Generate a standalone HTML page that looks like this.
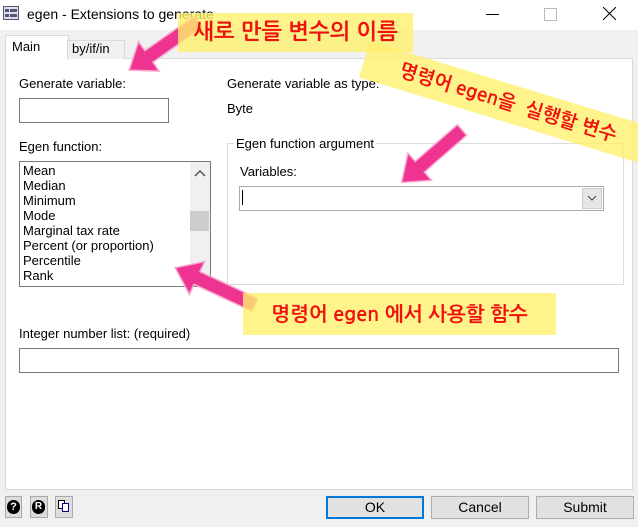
<!DOCTYPE html>
<html><head><meta charset="utf-8"><style>
body{margin:0;width:638px;height:527px;background:#f0f0f0;position:relative;overflow:hidden;font-family:"Liberation Sans","Noto Sans CJK KR",sans-serif;font-size:13px;color:#000}
.a{position:absolute}
.lbl{position:absolute;font-size:13px;white-space:nowrap}
.inp{position:absolute;background:#fff;border:1px solid #7a7a7a;box-sizing:border-box}
.btn{position:absolute;background:#e1e1e1;border:1px solid #adadad;box-sizing:border-box;text-align:center;line-height:21px;font-size:14px}
.y{position:absolute;background:rgba(255,240,110,.8);color:#f01010;font-weight:bold;font-family:"NanumGothic","Noto Sans CJK KR",sans-serif;white-space:nowrap;text-align:center}
</style></head><body>
<div class="a" style="left:0;top:0;width:638px;height:30px;background:#fff"></div>
<svg class="a" style="left:3px;top:6px" width="16" height="14"><rect x="0.5" y="0.5" width="15" height="13" fill="#dde" stroke="#557"/><rect x="2" y="3" width="4" height="3" fill="#557"/><rect x="7" y="3" width="7" height="3" fill="#557"/><rect x="2" y="8" width="4" height="3" fill="#557"/><rect x="7" y="8" width="7" height="3" fill="#557"/></svg>
<div class="lbl" style="left:27px;top:6px;font-size:14px">egen - Extensions to generate</div>
<div class="a" style="left:486px;top:14px;width:13px;height:1px;background:#000"></div>
<div class="a" style="left:544px;top:8px;width:11px;height:11px;border:1px solid #bbb"></div>
<svg class="a" style="left:603px;top:7px" width="13" height="13"><path d="M0 0L13 13M13 0L0 13" stroke="#000"/></svg>
<div class="a" style="left:5px;top:58px;width:626px;height:430px;background:#fff;border:1px solid #d9d9d9"></div>
<div class="a" style="left:5px;top:35px;width:62px;height:24px;background:#fff;border:1px solid #d9d9d9;border-bottom:none"></div>
<div class="lbl" style="left:12px;top:39px">Main</div>
<div class="a" style="left:67px;top:40px;width:56px;height:18px;background:#f0f0f0;border:1px solid #d9d9d9;border-bottom:none"></div>
<div class="lbl" style="left:72px;top:41px">by/if/in</div>
<div class="lbl" style="left:19px;top:76px">Generate variable:</div>
<div class="inp" style="left:19px;top:98px;width:150px;height:25px"></div>
<div class="lbl" style="left:227px;top:76px">Generate variable as type:</div>
<div class="lbl" style="left:227px;top:101px">Byte</div>
<div class="lbl" style="left:19px;top:139px">Egen function:</div>
<div class="inp" style="left:19px;top:161px;width:192px;height:126px"></div>
<div class="a" style="left:190px;top:162px;width:20px;height:124px;background:#f0f0f0"></div>
<div class="a" style="left:190px;top:211px;width:19px;height:20px;background:#cdcdcd"></div>
<svg class="a" style="left:194px;top:170px" width="12" height="8"><path d="M1 6L6 1L11 6" stroke="#555" stroke-width="1.5" fill="none"/></svg>
<div class="a" style="left:23px;top:163px;line-height:15px;font-size:13px">Mean<br>Median<br>Minimum<br>Mode<br>Marginal tax rate<br>Percent (or proportion)<br>Percentile<br>Rank</div>
<div class="a" style="left:227px;top:143px;width:395px;height:140px;border:1px solid #dcdcdc"></div>
<div class="lbl" style="left:234px;top:136px;background:#fff;padding:0 2px">Egen function argument</div>
<div class="lbl" style="left:240px;top:164px">Variables:</div>
<div class="inp" style="left:239px;top:186px;width:365px;height:25px;border-color:#aaa"></div>
<div class="a" style="left:242px;top:190px;width:1px;height:15px;background:#000"></div>
<div class="a" style="left:582px;top:188px;width:20px;height:21px;background:#e5e5e5;border:1px solid #ccc;box-sizing:border-box"></div>
<svg class="a" style="left:587px;top:195px" width="10" height="6"><path d="M1 1L5 5L9 1" stroke="#444" fill="none"/></svg>
<div class="lbl" style="left:19px;top:326px">Integer number list: (required)</div>
<div class="inp" style="left:19px;top:348px;width:600px;height:25px"></div>

<div class="a" style="left:5px;top:496px;width:17px;height:22px;background:#ddd;border:1px solid #aaa;box-sizing:border-box"></div>
<div class="a" style="left:7px;top:500px;width:13px;height:14px;border-radius:7px;background:#000;color:#fff;font-size:11px;font-weight:bold;text-align:center;line-height:14px">?</div>
<div class="a" style="left:30px;top:496px;width:18px;height:22px;background:#ddd;border:1px solid #aaa;box-sizing:border-box"></div>
<div class="a" style="left:32px;top:500px;width:13px;height:14px;border-radius:7px;background:#000;color:#fff;font-size:10px;font-weight:bold;text-align:center;line-height:14px">R</div>
<div class="a" style="left:55px;top:496px;width:18px;height:22px;background:#ddd;border:1px solid #aaa;box-sizing:border-box"></div>
<svg class="a" style="left:58px;top:500px" width="12" height="13"><rect x="0.5" y="0.5" width="6" height="8" fill="#fff" stroke="#000"/><rect x="4.5" y="3.5" width="6" height="8" fill="#fff" stroke="#008"/></svg>
<div class="btn" style="left:326px;top:496px;width:98px;height:23px;border:2px solid #0078d7;line-height:19px">OK</div>
<div class="btn" style="left:431px;top:496px;width:98px;height:23px">Cancel</div>
<div class="btn" style="left:536px;top:496px;width:98px;height:23px">Submit</div>

<svg class="a" style="left:0;top:0" width="638" height="527">
<g fill="#ee3391" stroke="#f9a8cf" stroke-width="1.5">
<g transform="translate(198,22) rotate(145)"><polygon points="0,-7 60,-7 60,-18 84,0 60,18 60,7 0,7"/></g>
<g transform="translate(462,130) rotate(139)"><polygon points="0,-7 56,-7 56,-18 80,0 56,18 56,7 0,7"/></g>
<g transform="translate(255,305) rotate(205)"><polygon points="0,-7 64,-7 64,-18 88,0 64,18 64,7 0,7"/></g>
</g></svg>

<div class="y" style="left:178px;top:13px;width:235px;height:39px;line-height:39px;font-size:22px">새로 만들 변수의 이름</div>
<div class="y" style="left:358px;top:84px;width:300px;height:38px;line-height:38px;font-size:19px;transform:rotate(17deg);transform-origin:center">명령어 egen을&nbsp; 실행할 변수</div>
<div class="y" style="left:243px;top:293px;width:313px;height:42px;line-height:42px;font-size:20px">명령어 egen 에서 사용할 함수</div>
</body></html>
